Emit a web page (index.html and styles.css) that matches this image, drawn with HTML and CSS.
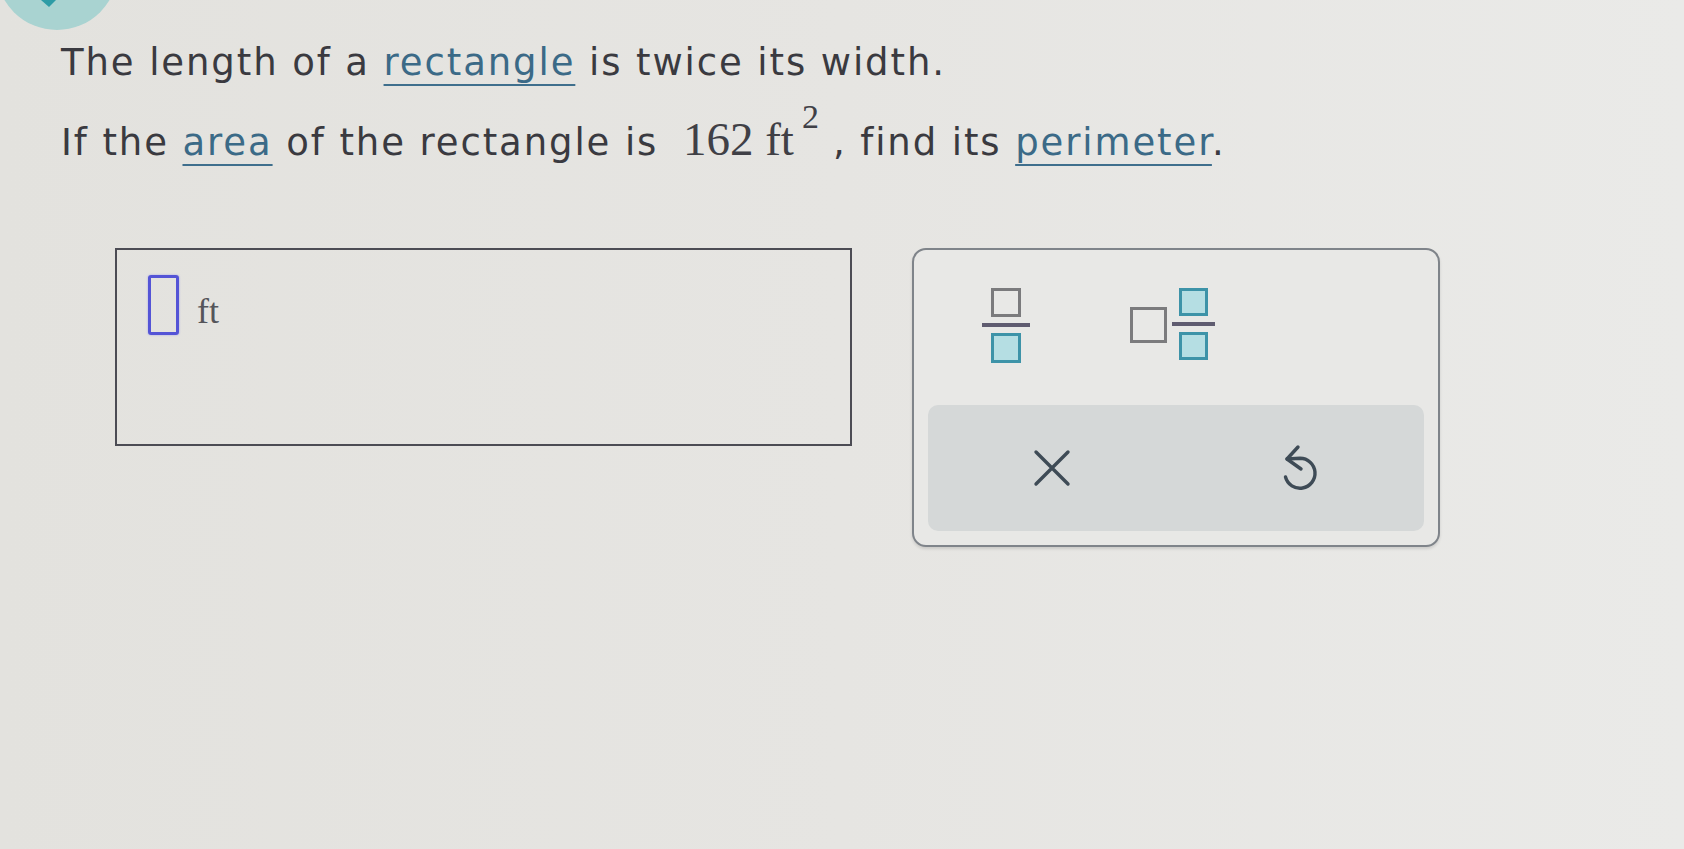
FILE: index.html
```html
<!DOCTYPE html>
<html>
<head>
<meta charset="utf-8">
<link rel="stylesheet" href="styles.css">
</head>
<body>
<div class="badge">
  <svg class="badge-mark" width="24" height="12" viewBox="0 0 24 12"><path d="M5 0 L13 7 L20 0 Z" fill="#2e9ca6"/></svg>
</div>
<main class="page">
  <p class="line line1">The length of a <span class="link">rectangle</span> is twice its width.</p>
  <p class="line line2">If the <span class="link">area</span> of the rectangle is <span class="math">162 ft<sup class="sup">2</sup></span>, find its <span class="link">perimeter</span>.</p>

  <div class="work">
    <div class="answer">
      <div class="field"></div>
      <span class="unit">ft</span>
    </div>

    <div class="panel">
      <div class="icons">
        <div class="frac">
          <div class="box box-gray"></div>
          <div class="bar-line"></div>
          <div class="box box-teal"></div>
        </div>
        <div class="mixed">
          <div class="whole box-gray"></div>
          <div class="frac frac-small">
            <div class="box box-teal"></div>
            <div class="bar-line"></div>
            <div class="box box-teal"></div>
          </div>
        </div>
      </div>
      <div class="actions">
        <div class="action">
          <svg width="40" height="40" viewBox="0 0 40 40"><path d="M4 4 L36 36 M36 4 L4 36" stroke="#3e4b56" stroke-width="3.4" stroke-linecap="round" fill="none"/></svg>
        </div>
        <div class="action">
          <svg width="40" height="48" viewBox="0 0 40 48"><path d="M7 15 L20 14.2 A15 15 0 1 1 5.5 33" stroke="#3e4b56" stroke-width="3.4" stroke-linecap="round" fill="none"/><path d="M18 3 L7 15 L21 25" stroke="#3e4b56" stroke-width="3.4" stroke-linecap="round" stroke-linejoin="round" fill="none"/></svg>
        </div>
      </div>
    </div>
  </div>
</main>
</body>
</html>
```

FILE: styles.css
```css
html, body {
  margin: 0;
  padding: 0;
}
body {
  width: 1684px;
  height: 849px;
  overflow: hidden;
  background: linear-gradient(90deg, #e3e2de 0%, #e6e5e2 50%, #eaeae8 100%);
  font-family: "DejaVu Sans", "Open Sans", sans-serif;
  color: #3a3a40;
  position: relative;
}
.badge {
  position: absolute;
  left: -4px;
  top: -92px;
  width: 122px;
  height: 122px;
  border-radius: 50%;
  background: #a9d3d1;
}
.badge-mark {
  position: absolute;
  left: 40px;
  top: 92px;
}
.page {
  padding-left: 61px;
  padding-top: 38px;
}
.line {
  margin: 0;
  font-size: 37px;
  line-height: 50px;
  letter-spacing: 1.9px;
  white-space: nowrap;
}
.line2 {
  margin-top: 30px;
}
.link {
  color: #3b6a87;
  text-decoration: underline;
  text-decoration-color: #3f6f8d;
  text-decoration-thickness: 2px;
  text-underline-offset: 9px;
  text-decoration-skip-ink: none;
}
.math {
  font-family: "Liberation Serif", "Times New Roman", serif;
  font-size: 47px;
  line-height: 0;
  letter-spacing: 0;
  color: #404046;
  margin-left: 11px;
  margin-right: 14px;
}
.sup {
  font-size: 34px;
  vertical-align: 0;
  position: relative;
  top: -27px;
  margin-left: 8px;
  line-height: 0;
}
.work {
  display: flex;
  align-items: flex-start;
  gap: 60px;
  margin-top: 80px;
  margin-left: 54px;
}
.answer {
  box-sizing: border-box;
  width: 737px;
  height: 198px;
  border: 2px solid #4c4c54;
  padding: 25px 0 0 31px;
  display: flex;
  align-items: flex-start;
  gap: 18px;
}
.field {
  box-sizing: border-box;
  width: 31px;
  height: 60px;
  border: 3px solid #5454d6;
  border-radius: 3px;
  box-shadow: 0 0 2px rgba(110, 110, 240, 0.6);
}
.unit {
  font-family: "Liberation Serif", "Times New Roman", serif;
  font-size: 36px;
  line-height: 36px;
  color: #55555a;
  margin-top: 18px;
}
.panel {
  box-sizing: border-box;
  width: 528px;
  height: 299px;
  border: 2px solid #7f848a;
  border-radius: 14px;
  padding: 38px 14px 14px 14px;
  background: #e8e8e6;
  box-shadow: 0 2px 3px rgba(0, 0, 0, 0.12);
  display: flex;
  flex-direction: column;
}
.icons {
  height: 117px;
  padding-left: 54px;
  display: flex;
  align-items: flex-start;
  gap: 100px;
}
.frac {
  display: flex;
  flex-direction: column;
  align-items: center;
  width: 48px;
}
.box {
  box-sizing: border-box;
  width: 30px;
  height: 29px;
}
.box-gray {
  border: 3px solid #7b7b7d;
  background: transparent;
}
.box-teal {
  border: 3px solid #3d93a8;
  background: #b5dee3;
}
.bar-line {
  width: 100%;
  height: 4px;
  background: #5f5c70;
  margin: 6px 0;
}
.frac .box-teal:last-child {
  height: 30px;
}
.mixed {
  display: flex;
  align-items: flex-start;
  gap: 5px;
}
.whole {
  box-sizing: border-box;
  width: 37px;
  height: 36px;
  margin-top: 19px;
}
.frac-small {
  width: 43px;
}
.frac-small .box {
  width: 29px;
  height: 28px;
}
.frac-small .box-teal:last-child {
  height: 28px;
}
.actions {
  flex: 1;
  background: #d5d8d8;
  border-radius: 10px;
  display: grid;
  grid-template-columns: 1fr 1fr;
}
.action {
  display: flex;
  align-items: center;
  justify-content: center;
}
```
